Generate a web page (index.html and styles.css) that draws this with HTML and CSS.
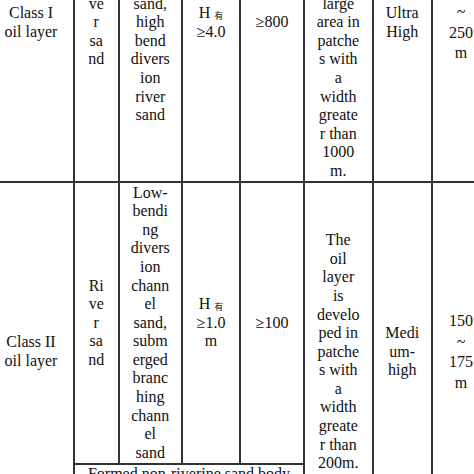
FILE: index.html
```html
<!DOCTYPE html>
<html>
<head>
<meta charset="utf-8">
<link rel="stylesheet" href="styles.css">
</head>
<body>
<div class="page">
<table class="grid">
<colgroup>
<col class="w1"><col class="w2"><col class="w3"><col class="w4"><col class="w5"><col class="w6"><col class="w7"><col class="w8">
</colgroup>
<tr class="r1">
<td>Class I<br>oil layer</td>
<td>Ri<br>ve<br>r<br>sa<br>nd</td>
<td>Main<br>chann<br>el<br>river<br>sand,<br>high<br>bend<br>divers<br>ion<br>river<br>sand</td>
<td>H <span class="sub">有</span><br>≥4.0</td>
<td>≥800</td>
<td>The<br>oil<br>layer<br>is<br>develo<br>ped in<br>a<br>large<br>area in<br>patche<br>s with<br>a<br>width<br>greate<br>r than<br>1000<br>m.</td>
<td>Ultra<br>High</td>
<td class="wide">200<br>~<br>250<br>m</td>
</tr>
<tr class="r2">
<td rowspan="2">Class II<br>oil layer</td>
<td>Ri<br>ve<br>r<br>sa<br>nd</td>
<td>Low-<br>bendi<br>ng<br>divers<br>ion<br>chann<br>el<br>sand,<br>subm<br>erged<br>branc<br>hing<br>chann<br>el<br>sand</td>
<td>H <span class="sub">有</span><br>≥1.0<br>m</td>
<td>≥100</td>
<td rowspan="2">The<br>oil<br>layer<br>is<br>develo<br>ped in<br>patche<br>s with<br>a<br>width<br>greate<br>r than<br>200m.</td>
<td rowspan="2">Medi<br>um-<br>high</td>
<td rowspan="2" class="wide">150<br>~<br>175<br>m</td>
</tr>
<tr class="r3">
<td colspan="4">Formed non-riverine sand body<br>with poor continuity<br>and small area</td>
</tr>
</table>
</div>
</body>
</html>
```
FILE: styles.css
```css
html, body {
  margin: 0;
  padding: 0;
  background: #ffffff;
}
.page {
  width: 474px;
  height: 474px;
  overflow: hidden;
  background: #ffffff;
}
.grid {
  border-collapse: collapse;
  table-layout: fixed;
  width: 502px;
  margin: -138px 0 0 -13px;
  font-family: "Liberation Serif", "Times New Roman", serif;
  font-size: 16px;
  line-height: 18.6px;
  color: #111111;
}
.w1 { width: 86px; }
.w2 { width: 44.5px; }
.w3 { width: 63.5px; }
.w4 { width: 58px; }
.w5 { width: 64px; }
.w6 { width: 68.5px; }
.w7 { width: 59.5px; }
.w8 { width: 58px; }
.grid td {
  border: 2px solid #333333;
  padding: 0;
  text-align: center;
  vertical-align: middle;
  white-space: nowrap;
  overflow: hidden;
}
.r1 { height: 319px; }
.r2 { height: 282px; }
.r3 { height: 58px; }
.wide {
  line-height: 20.5px;
}
.sub {
  font-family: "Noto Sans CJK SC", sans-serif;
  font-size: 9px;
  vertical-align: -1px;
  line-height: 1;
}
```
